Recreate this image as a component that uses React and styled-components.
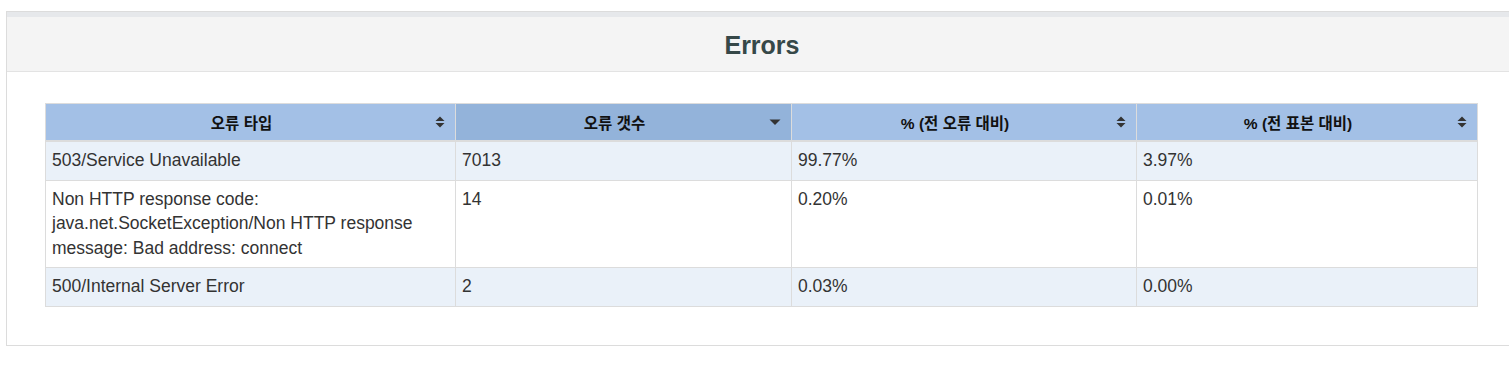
import styled, { createGlobalStyle } from "styled-components";

const Global = createGlobalStyle`
	body {
		margin: 0;
		background: #fff;
		font-family: "Liberation Sans", "Noto Sans CJK KR", sans-serif;
		overflow: hidden;
	}
`;

const Panel = styled.div`
	margin: 11px 0 0 6px;
	width: 1510px;
	border: 1px solid #dcdcdc;
	background: #fff;
`;

const PanelHead = styled.div`
	height: 54px;
	border-top: 5px solid #e6e8eb;
	border-bottom: 1px solid #e3e3e3;
	background: #f4f4f4;
	display: flex;
	align-items: center;
	justify-content: center;
`;

const Title = styled.h2`
	margin: 2px 0 0;
	font-size: 25px;
	font-weight: bold;
	color: #364848;
`;

const PanelBody = styled.div`
	padding: 31px 39px 38px 38px;
`;

const Table = styled.table`
	width: 100%;
	border-collapse: collapse;
	table-layout: fixed;
	border: 1px solid #dcdcdc;
`;

const Th = styled.th`
	position: relative;
	height: 36px;
	padding: 0 24px 0 6px;
	background: ${(p) => (p.sorted ? "#93b3da" : "#a3c0e6")};
	border: 1px solid #dcdcdc;
	border-bottom: 2px solid #dcdcdc;
	font-size: 15.5px;
	font-weight: bold;
	color: #111;
	text-align: center;
`;

const SortIcon = styled.svg`
	position: absolute;
	right: 10px;
	top: 50%;
	transform: translateY(-50%);
`;

const Row = styled.tr`
	background: ${(p) => (p.odd ? "#eaf1f9" : "#fff")};
`;

const Td = styled.td`
	padding: 6px 6px 7px;
	border: 1px solid #dcdcdc;
	font-size: 17.5px;
	line-height: 24.5px;
	color: #333;
	vertical-align: top;
`;

function Both() {
	return (
		<SortIcon width="10" height="12" viewBox="0 0 10 12">
			<path d="M5 0.5 L9.5 5 L0.5 5 Z" fill="#333" />
			<path d="M0.5 7 L9.5 7 L5 11.5 Z" fill="#333" />
		</SortIcon>
	);
}

function Desc() {
	return (
		<SortIcon width="12" height="8" viewBox="0 0 12 8">
			<path d="M0.5 1.5 L11.5 1.5 L6 7 Z" fill="#333" />
		</SortIcon>
	);
}

const columns = [
	{ label: "오류 타입", width: 410 },
	{ label: "오류 갯수", width: 336, sorted: true },
	{ label: "% (전 오류 대비)", width: 345 },
	{ label: "% (전 표본 대비)", width: 341 },
];

const rows = [
	["503/Service Unavailable", "7013", "99.77%", "3.97%"],
	[
		"Non HTTP response code: java.net.SocketException/Non HTTP response message: Bad address: connect",
		"14",
		"0.20%",
		"0.01%",
	],
	["500/Internal Server Error", "2", "0.03%", "0.00%"],
];

export default function App() {
	return (
		<>
			<Global />
			<Panel>
				<PanelHead>
					<Title>Errors</Title>
				</PanelHead>
				<PanelBody>
					<Table>
						<colgroup>
							{columns.map((c) => (
								<col key={c.label} style={{ width: c.width }} />
							))}
						</colgroup>
						<thead>
							<tr>
								{columns.map((c) => (
									<Th key={c.label} sorted={c.sorted}>
										{c.label}
										{c.sorted ? <Desc /> : <Both />}
									</Th>
								))}
							</tr>
						</thead>
						<tbody>
							{rows.map((r, i) => (
								<Row key={i} odd={i % 2 == 0}>
									{r.map((v, j) => (
										<Td key={j}>{v}</Td>
									))}
								</Row>
							))}
						</tbody>
					</Table>
				</PanelBody>
			</Panel>
		</>
	);
}
